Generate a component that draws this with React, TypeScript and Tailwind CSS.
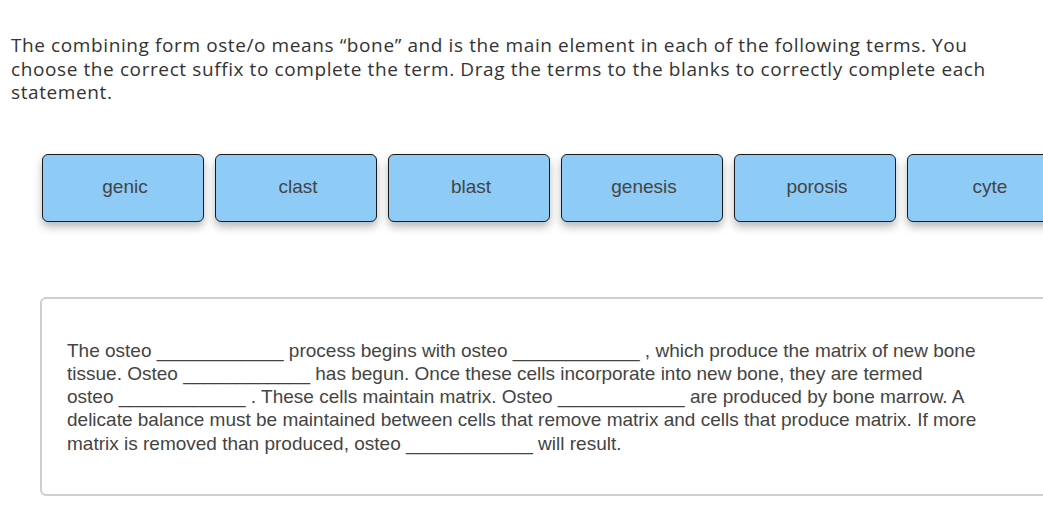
import React from "react";

const tiles = ["genic", "clast", "blast", "genesis", "porosis", "cyte"];

function Blank() {
  return <span className="inline-block">____________</span>;
}

export default function App() {
  return (
    <div className="w-[1043px] h-[528px] overflow-hidden bg-white">
      <div
        className="pt-[34px] pl-[11px] text-[19px] leading-[23.5px] text-[#333] tracking-[0.6px] whitespace-nowrap"
        style={{ fontFamily: "'Open Sans', Lato, sans-serif" }}
      >
        The combining form oste/o means “bone” and is the main element in each of the following terms. You
        <br />
        choose the correct suffix to complete the term. Drag the terms to the blanks to correctly complete each
        <br />
        statement.
      </div>
      <div className="flex gap-[11px] pl-[42px] mt-[49px] w-[1200px]">
        {tiles.map((t) => (
          <div
            key={t}
            className="w-[162px] h-[68px] shrink-0 rounded-[6px] border border-[#1a1a1a] bg-[#8ecbf6] shadow-[0_5px_8px_rgba(0,0,0,0.28)] flex items-center justify-center pl-[4px] text-[19px] text-[#444]"
            style={{ fontFamily: "'Liberation Sans', Arial, sans-serif" }}
          >
            {t}
          </div>
        ))}
      </div>
      <div
        className="ml-[40px] mt-[75px] w-[1020px] h-[199px] rounded-[6px] border-2 border-[#cfcfcf] pt-[40px] pl-[25px] text-[19px] leading-[23.3px] text-[#444] whitespace-nowrap"
        style={{ fontFamily: "'Liberation Sans', Arial, sans-serif" }}
      >
        The osteo <Blank /> process begins with osteo <Blank /> , which produce the matrix of new bone
        <br />
        tissue. Osteo <Blank /> has begun. Once these cells incorporate into new bone, they are termed
        <br />
        osteo <Blank /> . These cells maintain matrix. Osteo <Blank /> are produced by bone marrow. A
        <br />
        delicate balance must be maintained between cells that remove matrix and cells that produce matrix. If more
        <br />
        matrix is removed than produced, osteo <Blank /> will result.
      </div>
    </div>
  );
}
